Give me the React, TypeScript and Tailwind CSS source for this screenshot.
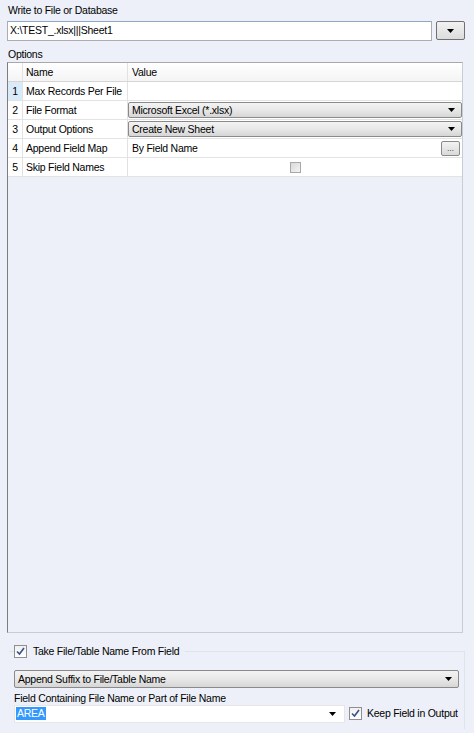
import React from "react";

const Arrow = () => (
  <svg width="7" height="4" viewBox="0 0 7 4">
    <path d="M0 0h7L3.5 4z" fill="#000" />
  </svg>
);

const Check = () => (
  <span className="flex h-[13px] w-[13px] shrink-0 items-center justify-center border border-[#8f8f8f] bg-gradient-to-b from-[#f0f0f0] to-white">
    <svg width="9" height="9" viewBox="0 0 9 9">
      <path d="M1 4.5L3.5 7L8 1" stroke="#3b4f8a" strokeWidth="1.6" fill="none" />
    </svg>
  </span>
);

function Combo({ text }: { text: string }) {
  return (
    <div className="flex h-full w-full items-center justify-between rounded-[2px] border border-[#8a8a8a] bg-gradient-to-b from-[#f3f3f3] via-[#e8e8e8] to-[#d6d6d6] pl-[3px] pr-[6px]">
      <span>{text}</span>
      <Arrow />
    </div>
  );
}

const rows = [
  { n: "1", name: "Max Records Per File", value: null as React.ReactNode },
  { n: "2", name: "File Format", value: <Combo text="Microsoft Excel (*.xlsx)" /> },
  { n: "3", name: "Output Options", value: <Combo text="Create New Sheet" /> },
  {
    n: "4",
    name: "Append Field Map",
    value: (
      <div className="flex h-full items-center justify-between pl-[4px] pr-[2px]">
        <span>By Field Name</span>
        <span className="flex h-[15px] w-[19px] items-center justify-center rounded-[2px] border border-[#8a8a8a] bg-gradient-to-b from-[#f3f3f3] to-[#d9d9d9] text-[9px] leading-none text-[#555]">
          ...
        </span>
      </div>
    ),
  },
  {
    n: "5",
    name: "Skip Field Names",
    value: (
      <div className="flex h-full items-center justify-center">
        <span className="h-[11px] w-[11px] border border-[#a8a8a8] bg-gradient-to-br from-[#d8d8d8] to-[#f4f4f4]" />
      </div>
    ),
  },
];

export default function App() {
  return (
    <div className="flex h-[733px] w-[474px] flex-col whitespace-nowrap bg-[#edf0f8] font-['Liberation_Sans',sans-serif] text-[10.5px] leading-none tracking-[-0.25px] text-black">
      <div className="px-[8px] pt-[5px]">Write to File or Database</div>
      <div className="mt-[5px] flex items-center gap-[4px] pl-[7px]">
        <div className="flex h-[20px] w-[425px] items-center border border-[#abadb3] border-t-[#8ea8c4] bg-white px-[2px]">
          X:\TEST_.xlsx|||Sheet1
        </div>
        <div className="flex h-[19px] w-[29px] items-center justify-center rounded-[2px] border border-[#707070] bg-gradient-to-b from-[#f2f2f2] to-[#dcdcdc]">
          <Arrow />
        </div>
      </div>
      <div className="px-[8px] pt-[8px]">Options</div>
      <div className="ml-[7px] mt-[3px] flex h-[571px] w-[456px] flex-col border border-[#c8ccd4] border-l-[#7d7d7d] border-t-[#a8a8a8]">
        <div className="flex h-[19px] border-b border-[#d5d5d5] bg-gradient-to-b from-white to-[#f4f4f4]">
          <div className="w-[15px] border-r border-[#e2e2e2]" />
          <div className="flex w-[105px] items-center border-r border-[#e2e2e2] pl-[3px]">Name</div>
          <div className="flex flex-1 items-center pl-[4px]">Value</div>
        </div>
        {rows.map((r) => (
          <div key={r.n} className="flex h-[19px] border-b border-[#e3e3e3] bg-white">
            <div
              className={`flex w-[15px] items-center justify-center border-r border-[#e2e2e2] ${
                r.n === "1" ? "bg-[#d9ebf9]" : "bg-white"
              }`}
            >
              {r.n}
            </div>
            <div className="flex w-[105px] items-center border-r border-[#e2e2e2] pl-[3px]">{r.name}</div>
            <div className="flex-1 py-[1px]">{r.value}</div>
          </div>
        ))}
      </div>
      <div className="mx-[9px] mb-[4px] mt-[18px] flex flex-1 flex-col border-r border-t border-[#dfe3ea] px-[5px]">
        <div className="-mt-[7px] flex items-center gap-[6px] self-start bg-[#edf0f8] pr-[6px]">
          <Check />
          <span>Take File/Table Name From Field</span>
        </div>
        <div className="mt-[12px] h-[18px]">
          <Combo text="Append Suffix to File/Table Name" />
        </div>
        <div className="mt-[5px]">Field Containing File Name or Part of File Name</div>
        <div className="mt-[1px] flex items-center">
          <div className="flex h-[18px] w-[331px] items-center justify-between border border-[#e6e6e6] bg-white pl-[1px] pr-[8px]">
            <span className="bg-[#3399ff] px-[1px] py-[1px] text-white">AREA</span>
            <Arrow />
          </div>
          <div className="ml-[4px] flex items-center gap-[5px]">
            <Check />
            <span>Keep Field in Output</span>
          </div>
        </div>
      </div>
    </div>
  );
}
